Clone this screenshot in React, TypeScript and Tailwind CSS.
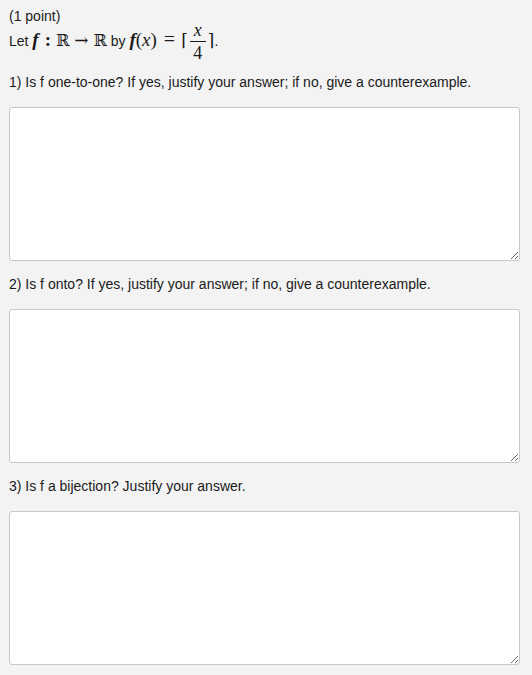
import React from 'react';

const questions = [
  '1) Is f one-to-one? If yes, justify your answer; if no, give a counterexample.',
  '2) Is f onto? If yes, justify your answer; if no, give a counterexample.',
  '3) Is f a bijection? Justify your answer.',
];

const Dbl = () => <span className="font-['DejaVu_Serif',serif] text-[16px] not-italic">ℝ</span>;

export default function App() {
  return (
    <div className="min-h-[675px] bg-[#f3f3f3] pl-[9px] pt-[8px] font-['Liberation_Sans',Arial,sans-serif] text-[14px] leading-[17px] text-[#1a1a1a]">
      <div>(1 point)</div>
      <div className="mt-[-2px] h-[51px] whitespace-nowrap">
        Let{' '}
        <span className="font-['Liberation_Serif',serif] text-[19px] font-bold italic">f</span>
        <span className="ml-[6px] mr-[5px] font-['Liberation_Serif',serif] text-[19px] font-bold">:</span>
        <Dbl />
        <span className="mx-[5px] font-['DejaVu_Serif',serif] text-[17px]">→</span>
        <Dbl /> by{' '}
        <span className="font-['Liberation_Serif',serif] text-[19px] font-bold italic">f</span>
        <span className="font-['Liberation_Serif',serif] text-[19px]">(</span>
        <span className="font-['Liberation_Serif',serif] text-[19px] italic">x</span>
        <span className="font-['Liberation_Serif',serif] text-[19px]">)</span>
        <span className="ml-[7px] mr-[6px] font-['Liberation_Serif',serif] text-[20px]">=</span>
        <span className="font-['DejaVu_Serif',serif] text-[17px]">⌈</span>
        <span className="mx-[2px] inline-flex flex-col items-center align-[10px] font-['Liberation_Serif',serif]">
          <span className="px-[2px] text-[18px] leading-[14px] italic">x</span>
          <span className="mt-[4px] h-px w-[16px] bg-[#1a1a1a]" />
          <span className="pt-[4px] text-[18px] leading-[14px]">4</span>
        </span>
        <span className="font-['DejaVu_Serif',serif] text-[17px]">⌉</span>
        <span>.</span>
      </div>
      {questions.map((q, i) => (
        <div key={i} className={i === 0 ? '' : 'mt-[15px]'}>
          <div>{q}</div>
          <textarea className="mt-[16px] block h-[154px] w-[511px] rounded-[3px] border border-[#c8c8c8] bg-white outline-none" />
        </div>
      ))}
    </div>
  );
}
